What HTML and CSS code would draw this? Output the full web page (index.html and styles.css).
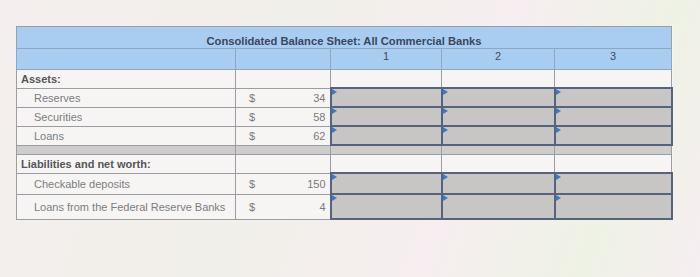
FILE: index.html
```html
<!DOCTYPE html>
<html>
<head>
<meta charset="utf-8">
<link rel="stylesheet" href="styles.css">
</head>
<body>
<div class="page">
  <table class="sheet">
    <colgroup>
      <col class="c-label"><col class="c-dollar"><col class="c-n"><col class="c-n2"><col class="c-n3">
    </colgroup>
    <tr class="r-title"><th colspan="5">Consolidated Balance Sheet: All Commercial Banks</th></tr>
    <tr class="r-head"><th></th><th></th><th>1</th><th>2</th><th>3</th></tr>
    <tr class="r-sec"><td class="sec">Assets:</td><td></td><td></td><td></td><td></td></tr>
    <tr class="r-row"><td class="lbl">Reserves</td><td class="amt"><span>$</span><span>34</span></td><td class="in"></td><td class="in"></td><td class="in"></td></tr>
    <tr class="r-row2"><td class="lbl">Securities</td><td class="amt"><span>$</span><span>58</span></td><td class="in"></td><td class="in"></td><td class="in"></td></tr>
    <tr class="r-row"><td class="lbl">Loans</td><td class="amt"><span>$</span><span>62</span></td><td class="in"></td><td class="in"></td><td class="in"></td></tr>
    <tr class="r-gap"><td></td><td></td><td></td><td></td><td></td></tr>
    <tr class="r-sec2"><td class="sec">Liabilities and net worth:</td><td></td><td></td><td></td><td></td></tr>
    <tr class="r-row3"><td class="lbl">Checkable deposits</td><td class="amt"><span>$</span><span>150</span></td><td class="in"></td><td class="in"></td><td class="in"></td></tr>
    <tr class="r-row4"><td class="lbl">Loans from the Federal Reserve Banks</td><td class="amt"><span>$</span><span>4</span></td><td class="in"></td><td class="in"></td><td class="in"></td></tr>
  </table>
</div>
</body>
</html>
```
FILE: styles.css
```css
html, body {
  margin: 0;
  padding: 0;
}
body {
  width: 700px;
  height: 277px;
  overflow: hidden;
  background: linear-gradient(110deg, #f4efee 0%, #f1efe9 40%, #f6eef0 65%, #eef2e4 85%, #f6eef2 100%);
  font-family: "Liberation Sans", Arial, sans-serif;
}
.page {
  padding: 26px 0 0 16px;
}
.sheet {
  border-collapse: collapse;
  width: 656px;
  table-layout: fixed;
  background: #f7f5f3;
  border: 1px solid #9aa0a6;
}
.c-label { width: 219px; }
.c-dollar { width: 95px; }
.c-n { width: 111px; }
.c-n2 { width: 113px; }
.c-n3 { width: 117px; }
.sheet th, .sheet td {
  padding: 0;
  border: 1px solid #9a9ea4;
  font-size: 11px;
}
.r-title th {
  height: 20px;
  background: #a9cdf0;
  color: #3a4760;
  font-weight: bold;
  font-size: 11.2px;
  text-align: center;
  vertical-align: bottom;
  padding-bottom: 1px;
  border-bottom: 1px solid #8ea6c0;
  border-left: none;
  border-right: none;
}
.r-head th {
  height: 19px;
  background: #a9cdf0;
  color: #3f4a5c;
  font-weight: normal;
  text-align: center;
  vertical-align: top;
  padding-top: 1px;
  border-color: #8ea6c0;
}
.r-sec td { height: 17px; }
.r-sec2 td { height: 17px; }
.r-row td { height: 17px; }
.r-row2 td { height: 17px; }
.r-row3 td { height: 19px; }
.r-row4 td { height: 23px; }
.r-gap td {
  height: 8px;
  background: #cfcdcb;
}
.sec {
  color: #545659;
  font-weight: bold;
  padding-left: 4px !important;
}
.lbl {
  color: #7a7d82;
  padding-left: 17px !important;
}
.amt {
  color: #77797d;
  padding: 0 4px 0 13px !important;
}
.amt span:first-child {
  float: left;
}
.amt span:last-child {
  float: right;
}
.sheet td.in {
  position: relative;
  background: #c7c6c4;
  border: 2px solid #56637d;
}
.sheet td.in::before {
  content: "";
  position: absolute;
  left: 0;
  top: 0;
  border-style: solid;
  border-width: 3px 0 3px 5px;
  border-color: transparent transparent transparent #3d79c2;
}
```
